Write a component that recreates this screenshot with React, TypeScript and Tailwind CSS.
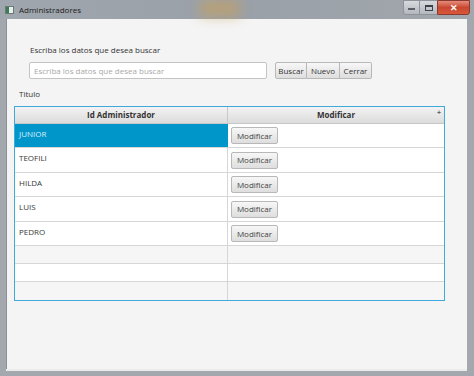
import React from 'react'

const FONT = { fontFamily: '"Open Sans", "Noto Sans", Arial, sans-serif' }

const rows = ['JUNIOR', 'TEOFILI', 'HILDA', 'LUIS', 'PEDRO']
const rowH = ['h-[24px]', 'h-[25px]', 'h-[24px]', 'h-[25px]', 'h-[24px]']

const BTN = 'h-[17px] border border-[#b8b8b8] bg-gradient-to-b from-[#f7f7f7] to-[#dedede] text-[8px] text-[#333] flex items-center justify-center'

export default function App() {
  return (
    <div className="w-[474px] h-[376px] bg-[#a3a8ae] flex flex-col overflow-hidden" style={FONT}>
      {/* title bar */}
      <div className="h-[19px] relative flex items-center bg-gradient-to-r from-[#a0a6ad] via-[#9aa0a8] to-[#a2a7ad]">
        <div className="absolute left-[200px] top-0 w-[40px] h-[17px] bg-[#c8a05a] opacity-60 blur-[6px]" />
        <div className="ml-[5px] w-[9px] h-[8px] border border-[#6b7a74] bg-[#e8efe9] flex">
          <div className="w-[3px] h-full bg-[#3c7a5c]" />
        </div>
        <span className="ml-[5px] text-[8px] text-[#1c1c1c] relative">Administradores</span>
        <div className="absolute right-[4px] top-0 flex h-[15px]">
          <div className="w-[17px] border border-[#8d939a] rounded-bl-[3px] bg-gradient-to-b from-[#d7dadd] to-[#b4b9be] flex items-end justify-center pb-[4px]">
            <div className="w-[7px] h-[2px] bg-[#5b6068]" />
          </div>
          <div className="w-[17px] border-y border-[#8d939a] bg-gradient-to-b from-[#d7dadd] to-[#b4b9be] flex items-center justify-center">
            <div className="w-[8px] h-[6px] border border-[#3c4048] border-t-2" />
          </div>
          <div className="w-[33px] border border-[#8a3b30] rounded-br-[3px] bg-gradient-to-b from-[#e58b7c] via-[#c9472f] to-[#d8573c] flex items-center justify-center text-white text-[9px] font-bold">
            ✕
          </div>
        </div>
      </div>

      {/* content */}
      <div className="ml-[6px] mr-[7px] h-[350px] bg-[#f4f4f4] border-l border-[#8c9197] flex flex-col">
        <div className="pl-[23px] pt-[26px] text-[8px] text-[#333] leading-[10px]">Escriba los datos que desea buscar</div>
        <div className="flex items-center pl-[22px] mt-[7px]">
          <div className="w-[238px] h-[17px] bg-white border border-[#c4c4c4] rounded-[2px] flex items-center pl-[4px] text-[8px] text-[#a8a8a8]">
            Escriba los datos que desea buscar
          </div>
          <div className="flex ml-[8px]">
            <div className={BTN + ' w-[32px] rounded-l-[2px]'}>Buscar</div>
            <div className={BTN + ' w-[33px] border-l-0'}>Nuevo</div>
            <div className={BTN + ' w-[32px] border-l-0 rounded-r-[2px]'}>Cerrar</div>
          </div>
        </div>
        <div className="pl-[12px] mt-[10px] text-[8px] text-[#333] leading-[10px]">Titulo</div>

        <div className="ml-[7px] mt-[7px] w-[431px] border border-[#3fa9dc] bg-white">
          <div className="flex h-[17px] bg-gradient-to-b from-[#f3f3f3] to-[#dcdcdc] border-b border-[#c8c8c8]">
            <div className="w-[213px] border-r border-[#c8c8c8] flex items-center justify-center text-[8px] font-bold text-[#333]">
              Id Administrador
            </div>
            <div className="flex-1 relative flex items-center justify-center text-[8px] font-bold text-[#333]">
              Modificar
              <span className="absolute right-[3px] top-[2px] text-[7px] leading-[8px] text-[#555]">+</span>
            </div>
          </div>
          {rows.map((name, i) => (
            <div key={name} className={'flex border-b border-[#d6d6d6] ' + rowH[i]}>
              <div
                className={
                  'w-[213px] border-r pl-[4px] pt-[5px] text-[8px] leading-[10px] ' +
                  (i === 0 ? 'bg-[#0096c9] text-[#d8f0fb] border-[#0096c9]' : 'text-[#383838] border-[#d6d6d6]')
                }
              >
                {name}
              </div>
              <div className="flex-1 flex items-center pl-[3px]">
                <div className={BTN + ' w-[47px] rounded-[2px] text-[#444]'}>Modificar</div>
              </div>
            </div>
          ))}
          {[0, 1, 2].map(i => (
            <div key={i} className={'flex h-[18px] ' + (i < 2 ? 'border-b border-[#d6d6d6] ' : '') + (i === 1 ? 'bg-white' : 'bg-[#f6f6f6]')}>
              <div className="w-[213px] border-r border-[#d6d6d6]" />
              <div className="flex-1" />
            </div>
          ))}
        </div>
      </div>
      <div className="h-[2px] ml-[6px] mr-[7px] bg-[#ebebeb]" />
    </div>
  )
}
